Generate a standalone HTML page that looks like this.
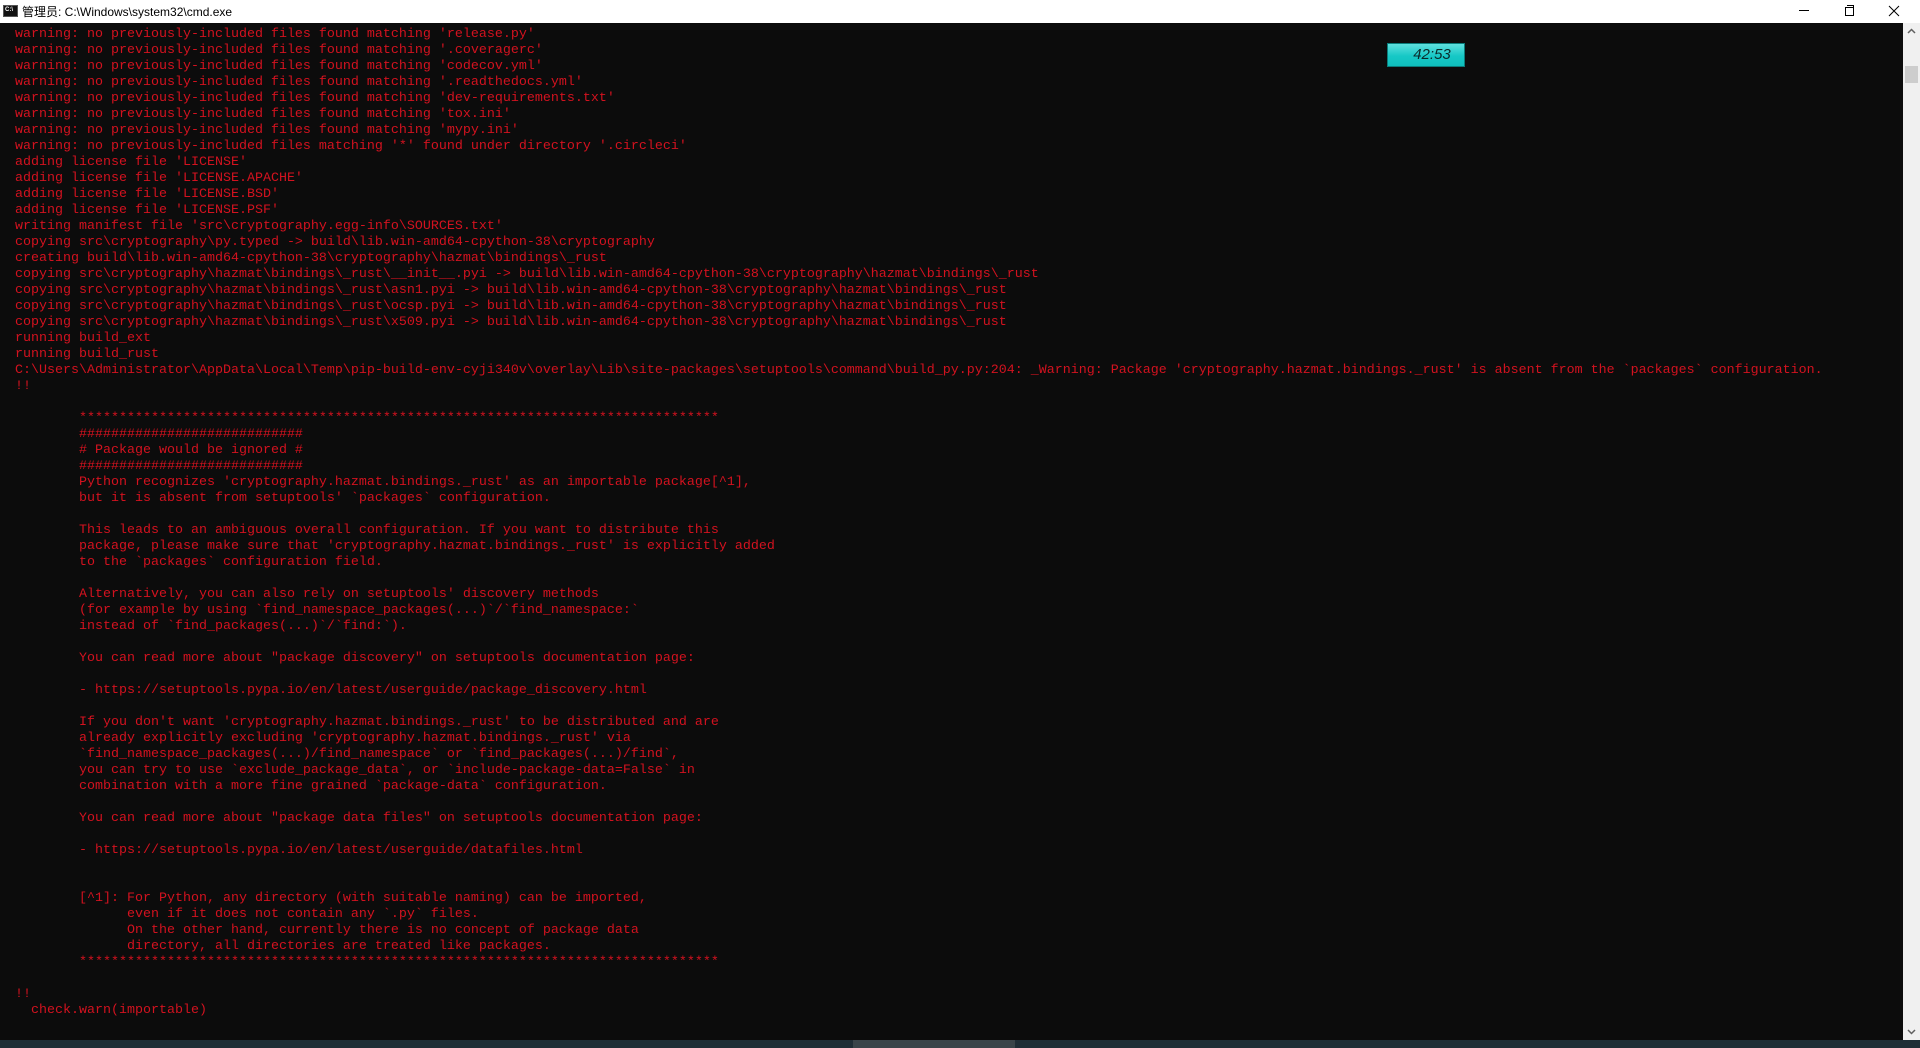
<!DOCTYPE html>
<html><head><meta charset="utf-8"><style>
html,body{margin:0;padding:0;width:1920px;height:1048px;overflow:hidden;background:#0c0c0c;}
#title{position:absolute;left:0;top:0;width:1920px;height:23px;background:#fff;}
#title .t{position:absolute;left:22px;top:3px;font:12px "Liberation Sans","Noto Sans CJK SC",sans-serif;color:#000;}
#icon{position:absolute;left:3px;top:5px;width:13px;height:10px;background:#111;border:1px solid #555;}
#icon span{position:absolute;left:1px;top:1px;font:bold 6px "Liberation Sans",sans-serif;color:#fff;line-height:7px;}
pre{position:absolute;left:15px;top:27px;margin:0;font:13.33px/16px "Liberation Mono",monospace;color:#d3121f;white-space:pre;}
#sb{position:absolute;left:1903px;top:23px;width:17px;height:1017px;background:#f0f0f0;}
#thumb{position:absolute;left:1905px;top:66px;width:13px;height:17px;background:#cdcdcd;}
#tb{position:absolute;left:0;top:1040px;width:1920px;height:8px;background:#1f2d35;}
#tb2{position:absolute;left:853px;top:1040px;width:162px;height:8px;background:#3a4449;}
#timer{position:absolute;left:1387px;top:43px;width:78px;height:24px;background:linear-gradient(#5fe0de,#16c8c6 55%,#0fbfbd);border:1px solid #0a7d7b;box-sizing:border-box;font:italic 15px "Liberation Sans",sans-serif;color:#0b2a2a;text-align:center;line-height:22px;padding-left:12px;}
.ctl{position:absolute;top:0;height:23px;font:14px "Liberation Sans",sans-serif;color:#000;}
</style></head><body>
<div id="title"><div id="icon"><span>C:\</span></div><div class="t">管理员: C:\Windows\system32\cmd.exe</div>
<div class="ctl" style="left:1799px;top:10px;width:10px;height:1px;background:#000"></div>
<div class="ctl" style="left:1845px;top:7px;width:7px;height:7px;border:1px solid #000;background:#fff"></div>
<div class="ctl" style="left:1847px;top:5px;width:7px;height:7px;border-top:1px solid #000;border-right:1px solid #000;height:6px;width:6px"></div>
<svg class="ctl" style="left:1888px;top:5px;width:12px;height:12px" viewBox="0 0 12 12"><path d="M1 1L11 11M11 1L1 11" stroke="#000" stroke-width="1"/></svg>
</div>
<pre>warning: no previously-included files found matching 'release.py'
warning: no previously-included files found matching '.coveragerc'
warning: no previously-included files found matching 'codecov.yml'
warning: no previously-included files found matching '.readthedocs.yml'
warning: no previously-included files found matching 'dev-requirements.txt'
warning: no previously-included files found matching 'tox.ini'
warning: no previously-included files found matching 'mypy.ini'
warning: no previously-included files matching '*' found under directory '.circleci'
adding license file 'LICENSE'
adding license file 'LICENSE.APACHE'
adding license file 'LICENSE.BSD'
adding license file 'LICENSE.PSF'
writing manifest file 'src\cryptography.egg-info\SOURCES.txt'
copying src\cryptography\py.typed -> build\lib.win-amd64-cpython-38\cryptography
creating build\lib.win-amd64-cpython-38\cryptography\hazmat\bindings\_rust
copying src\cryptography\hazmat\bindings\_rust\__init__.pyi -> build\lib.win-amd64-cpython-38\cryptography\hazmat\bindings\_rust
copying src\cryptography\hazmat\bindings\_rust\asn1.pyi -> build\lib.win-amd64-cpython-38\cryptography\hazmat\bindings\_rust
copying src\cryptography\hazmat\bindings\_rust\ocsp.pyi -> build\lib.win-amd64-cpython-38\cryptography\hazmat\bindings\_rust
copying src\cryptography\hazmat\bindings\_rust\x509.pyi -> build\lib.win-amd64-cpython-38\cryptography\hazmat\bindings\_rust
running build_ext
running build_rust
C:\Users\Administrator\AppData\Local\Temp\pip-build-env-cyji340v\overlay\Lib\site-packages\setuptools\command\build_py.py:204: _Warning: Package 'cryptography.hazmat.bindings._rust' is absent from the `packages` configuration.
!!

        ********************************************************************************
        ############################
        # Package would be ignored #
        ############################
        Python recognizes 'cryptography.hazmat.bindings._rust' as an importable package[^1],
        but it is absent from setuptools' `packages` configuration.

        This leads to an ambiguous overall configuration. If you want to distribute this
        package, please make sure that 'cryptography.hazmat.bindings._rust' is explicitly added
        to the `packages` configuration field.

        Alternatively, you can also rely on setuptools' discovery methods
        (for example by using `find_namespace_packages(...)`/`find_namespace:`
        instead of `find_packages(...)`/`find:`).

        You can read more about "package discovery" on setuptools documentation page:

        - https://setuptools.pypa.io/en/latest/userguide/package_discovery.html

        If you don't want 'cryptography.hazmat.bindings._rust' to be distributed and are
        already explicitly excluding 'cryptography.hazmat.bindings._rust' via
        `find_namespace_packages(...)/find_namespace` or `find_packages(...)/find`,
        you can try to use `exclude_package_data`, or `include-package-data=False` in
        combination with a more fine grained `package-data` configuration.

        You can read more about "package data files" on setuptools documentation page:

        - https://setuptools.pypa.io/en/latest/userguide/datafiles.html


        [^1]: For Python, any directory (with suitable naming) can be imported,
              even if it does not contain any `.py` files.
              On the other hand, currently there is no concept of package data
              directory, all directories are treated like packages.
        ********************************************************************************

!!
  check.warn(importable)</pre>
<div id="timer">42:53</div>
<div id="sb"></div>
<div id="thumb"></div>
<svg style="position:absolute;left:1907px;top:28px" width="9" height="6" viewBox="0 0 9 6"><path d="M1 5L4.5 1.5L8 5" stroke="#606060" stroke-width="1.5" fill="none"/></svg>
<svg style="position:absolute;left:1907px;top:1029px" width="9" height="6" viewBox="0 0 9 6"><path d="M1 1L4.5 4.5L8 1" stroke="#606060" stroke-width="1.5" fill="none"/></svg>
<div id="tb"></div><div id="tb2"></div>
</body></html>
